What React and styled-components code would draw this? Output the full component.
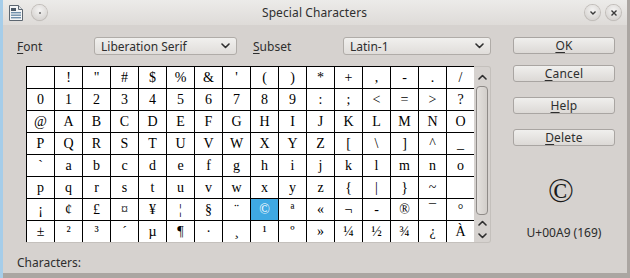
import React from 'react'
import styled, { createGlobalStyle } from 'styled-components'

const Global = createGlobalStyle`
  html, body {
    margin: 0;
    padding: 0;
    background: #aaa5a1;
  }
  body {
    font-family: "Noto Sans", "DejaVu Sans", sans-serif;
    font-size: 12px;
    color: #2e2e2e;
  }
`

const Desktop = styled.div`
  width: 630px;
  height: 278px;
  display: flex;
  align-items: flex-start;
  background: linear-gradient(90deg, #aba6a2 627px, #d9d6d3 627px);
  border-left: 3px solid #a6cde9;
  box-sizing: border-box;
`

const Window = styled.div`
  width: 624px;
  height: 273px;
  display: flex;
  flex-direction: column;
  background: #d6d2cf;
`

const TitleBar = styled.div`
  height: 25px;
  display: flex;
  align-items: center;
  padding: 0 6px 0 5px;
  background: linear-gradient(#ecebe9, #dedbd8);
`

const TitleSide = styled.div`
  width: 50px;
  display: flex;
  align-items: center;
  gap: ${(p) => p.gap || 8}px;
  justify-content: ${(p) => (p.right ? 'flex-end' : 'flex-start')};
`

const Title = styled.div`
  flex: 1;
  text-align: center;
  font-size: 12px;
  color: #2f2f2f;
  letter-spacing: 0.1px;
`

const RoundButton = styled.div`
  width: 15px;
  height: 15px;
  border-radius: 50%;
  display: flex;
  align-items: center;
  justify-content: center;
  background: radial-gradient(circle at 50% 35%, #f4f3f2, #cfccc9);
  box-shadow: 0 0 0 1px #c2beba, 0 1px 1px rgba(0, 0, 0, 0.15);
`

const Body = styled.div`
  flex: 1;
  display: flex;
  padding: 12px 0 0 14px;
`

const LeftCol = styled.div`
  width: 474px;
  display: flex;
  flex-direction: column;
`

const HeaderRow = styled.div`
  height: 18px;
  display: flex;
  align-items: center;
`

const Label = styled.div`
  width: ${(p) => p.w}px;
  color: #2e2e2e;
  font-size: 12px;
  u {
    text-decoration-thickness: 1px;
    text-underline-offset: 2px;
  }
`

const Combo = styled.div`
  width: ${(p) => p.w}px;
  height: 18px;
  box-sizing: border-box;
  display: flex;
  align-items: center;
  justify-content: space-between;
  padding: 0 6px 0 6px;
  border: 1px solid #b0aca8;
  border-radius: 3px;
  background: linear-gradient(#f1f0ee, #e0ddda);
  color: #2e2e2e;
  font-size: 12px;
`

const Gap = styled.div`
  width: ${(p) => p.w}px;
`

const CharBox = styled.div`
  margin: 11px 0 0 9px;
  width: 465px;
  height: 177px;
  display: flex;
  box-sizing: border-box;
`

const CharGrid = styled.div`
  width: 448px;
  height: 177px;
  display: grid;
  grid-template-columns: repeat(16, 28px);
  grid-auto-rows: 22px;
  background: #fff;
  border-bottom: 1px solid #c4c0bc;
  box-sizing: border-box;
`

const Cell = styled.div`
  box-sizing: border-box;
  border-left: 1px solid #000;
  border-top: 1px solid #000;
  display: flex;
  align-items: center;
  justify-content: center;
  font-family: "Liberation Serif", "DejaVu Serif", serif;
  font-size: 14px;
  line-height: 1;
  color: ${(p) => (p.selected ? '#fff' : '#000')};
  background: ${(p) => (p.selected ? '#3fa9e3' : '#fff')};
  padding-top: 1px;
`

const ScrollTrack = styled.div`
  width: 17px;
  height: 177px;
  box-sizing: border-box;
  border: 1px solid #c4c0bc;
  border-left: none;
  border-radius: 0 3px 3px 0;
  display: flex;
  flex-direction: column;
  align-items: center;
  padding-top: 4px;
  background: #d6d2cf;
`

const Thumb = styled.div`
  width: 12px;
  height: 130px;
  margin-top: 3px;
  box-sizing: border-box;
  border: 1px solid #8f8b88;
  border-radius: 4px;
  background: linear-gradient(90deg, #e4e1de, #d2ceca);
`

const ArrowBox = styled.div`
  height: 12px;
  display: flex;
  align-items: center;
  justify-content: center;
  margin-top: ${(p) => p.mt || 0}px;
`

const CharsLabel = styled.div`
  margin-top: 11px;
  font-size: 12px;
  color: #2e2e2e;
`

const RightCol = styled.div`
  margin-left: 22px;
  width: 102px;
  display: flex;
  flex-direction: column;
  align-items: center;
`

const Button = styled.div`
  width: 102px;
  height: 17px;
  box-sizing: border-box;
  margin-top: ${(p) => p.mt || 0}px;
  border: 1px solid #a9a5a2;
  border-radius: 3px;
  background: linear-gradient(#f0efed, #dcd9d6);
  display: flex;
  align-items: center;
  justify-content: center;
  font-size: 12px;
  color: #2e2e2e;
  letter-spacing: 0.2px;
  u {
    text-decoration-thickness: 1px;
    text-underline-offset: 2px;
  }
`

const BigGlyph = styled.div`
  margin-top: 28px;
  margin-left: -6px;
  font-family: "Liberation Serif", "DejaVu Serif", serif;
  font-size: 34px;
  line-height: 34px;
  color: #1a1a1a;
`

const CodeText = styled.div`
  margin-top: 16px;
  font-size: 12px;
  color: #2a2a2a;
`

const rows = [
  " !\"#$%&'()*+,-./",
  '0123456789:;<=>?',
  '@ABCDEFGHIJKLMNO',
  'PQRSTUVWXYZ[\\]^_',
  '`abcdefghijklmno',
  'pqrstuvwxyz{|}~ ',
  '¡¢£¤¥¦§¨©ª«¬-®¯°',
  '±²³´µ¶·¸¹º»¼½¾¿À',
]

const Chevron = ({ up, size = 9 }) => (
  <svg width={size} height={size - 3} viewBox="0 0 9 6">
    <polyline
      points={up ? '1,5 4.5,1.5 8,5' : '1,1 4.5,4.5 8,1'}
      fill="none"
      stroke="#2f2f2f"
      strokeWidth="1.6"
      strokeLinecap="round"
      strokeLinejoin="round"
    />
  </svg>
)

const AppIcon = () => (
  <svg width="16" height="18" viewBox="0 0 16 18">
    <path d="M1.5 1.5h9l4 4v11h-13z" fill="#f4f5f6" stroke="#5c6670" strokeWidth="1" />
    <path d="M10.5 1.5v4h4" fill="#dfe3e6" stroke="#5c6670" strokeWidth="1" />
    <rect x="3" y="4" width="5" height="3" fill="#4a5866" />
    <rect x="3" y="8" width="10" height="1.4" fill="#6f8fab" />
    <rect x="3" y="10.5" width="10" height="1.4" fill="#6f8fab" />
    <rect x="3" y="13" width="10" height="1.4" fill="#6f8fab" />
  </svg>
)

export default function App() {
  return (
    <>
      <Global />
      <Desktop>
        <Window>
          <TitleBar>
            <TitleSide gap={8}>
              <AppIcon />
              <RoundButton>
                <svg width="4" height="4" viewBox="0 0 4 4">
                  <circle cx="2" cy="2" r="1" fill="#6b6b6b" />
                </svg>
              </RoundButton>
            </TitleSide>
            <Title>Special Characters</Title>
            <TitleSide right gap={6}>
              <RoundButton>
                <svg width="8" height="6" viewBox="0 0 8 6">
                  <polyline points="1.5,1.5 4,4 6.5,1.5" fill="none" stroke="#3a3a3a" strokeWidth="1.4" />
                </svg>
              </RoundButton>
              <RoundButton>
                <svg width="8" height="8" viewBox="0 0 8 8">
                  <path d="M1.5 1.5L6.5 6.5M6.5 1.5L1.5 6.5" stroke="#3a3a3a" strokeWidth="1.4" />
                </svg>
              </RoundButton>
            </TitleSide>
          </TitleBar>
          <Body>
            <LeftCol>
              <HeaderRow>
                <Label w={77}>
                  <u>F</u>ont
                </Label>
                <Combo w={143}>
                  <span>Liberation Serif</span>
                  <Chevron />
                </Combo>
                <Gap w={16} />
                <Label w={90}>
                  <u>S</u>ubset
                </Label>
                <Combo w={148}>
                  <span>Latin-1</span>
                  <Chevron />
                </Combo>
              </HeaderRow>
              <CharBox>
                <CharGrid>
                  {rows.map((row, r) =>
                    Array.from(row).map((ch, c) => (
                      <Cell key={`${r}-${c}`} selected={ch === '©'}>
                        {ch}
                      </Cell>
                    ))
                  )}
                </CharGrid>
                <ScrollTrack>
                  <ArrowBox>
                    <Chevron up />
                  </ArrowBox>
                  <Thumb />
                  <ArrowBox mt={2}>
                    <Chevron up />
                  </ArrowBox>
                  <ArrowBox mt={1}>
                    <Chevron />
                  </ArrowBox>
                </ScrollTrack>
              </CharBox>
              <CharsLabel>Characters:</CharsLabel>
            </LeftCol>
            <RightCol>
              <Button>
                <span>
                  <u>O</u>K
                </span>
              </Button>
              <Button mt={11}>
                <span>
                  <u>C</u>ancel
                </span>
              </Button>
              <Button mt={15}>
                <span>
                  <u>H</u>elp
                </span>
              </Button>
              <Button mt={15}>
                <span>
                  <u>D</u>elete
                </span>
              </Button>
              <BigGlyph>©</BigGlyph>
              <CodeText>U+00A9 (169)</CodeText>
            </RightCol>
          </Body>
        </Window>
      </Desktop>
    </>
  )
}
